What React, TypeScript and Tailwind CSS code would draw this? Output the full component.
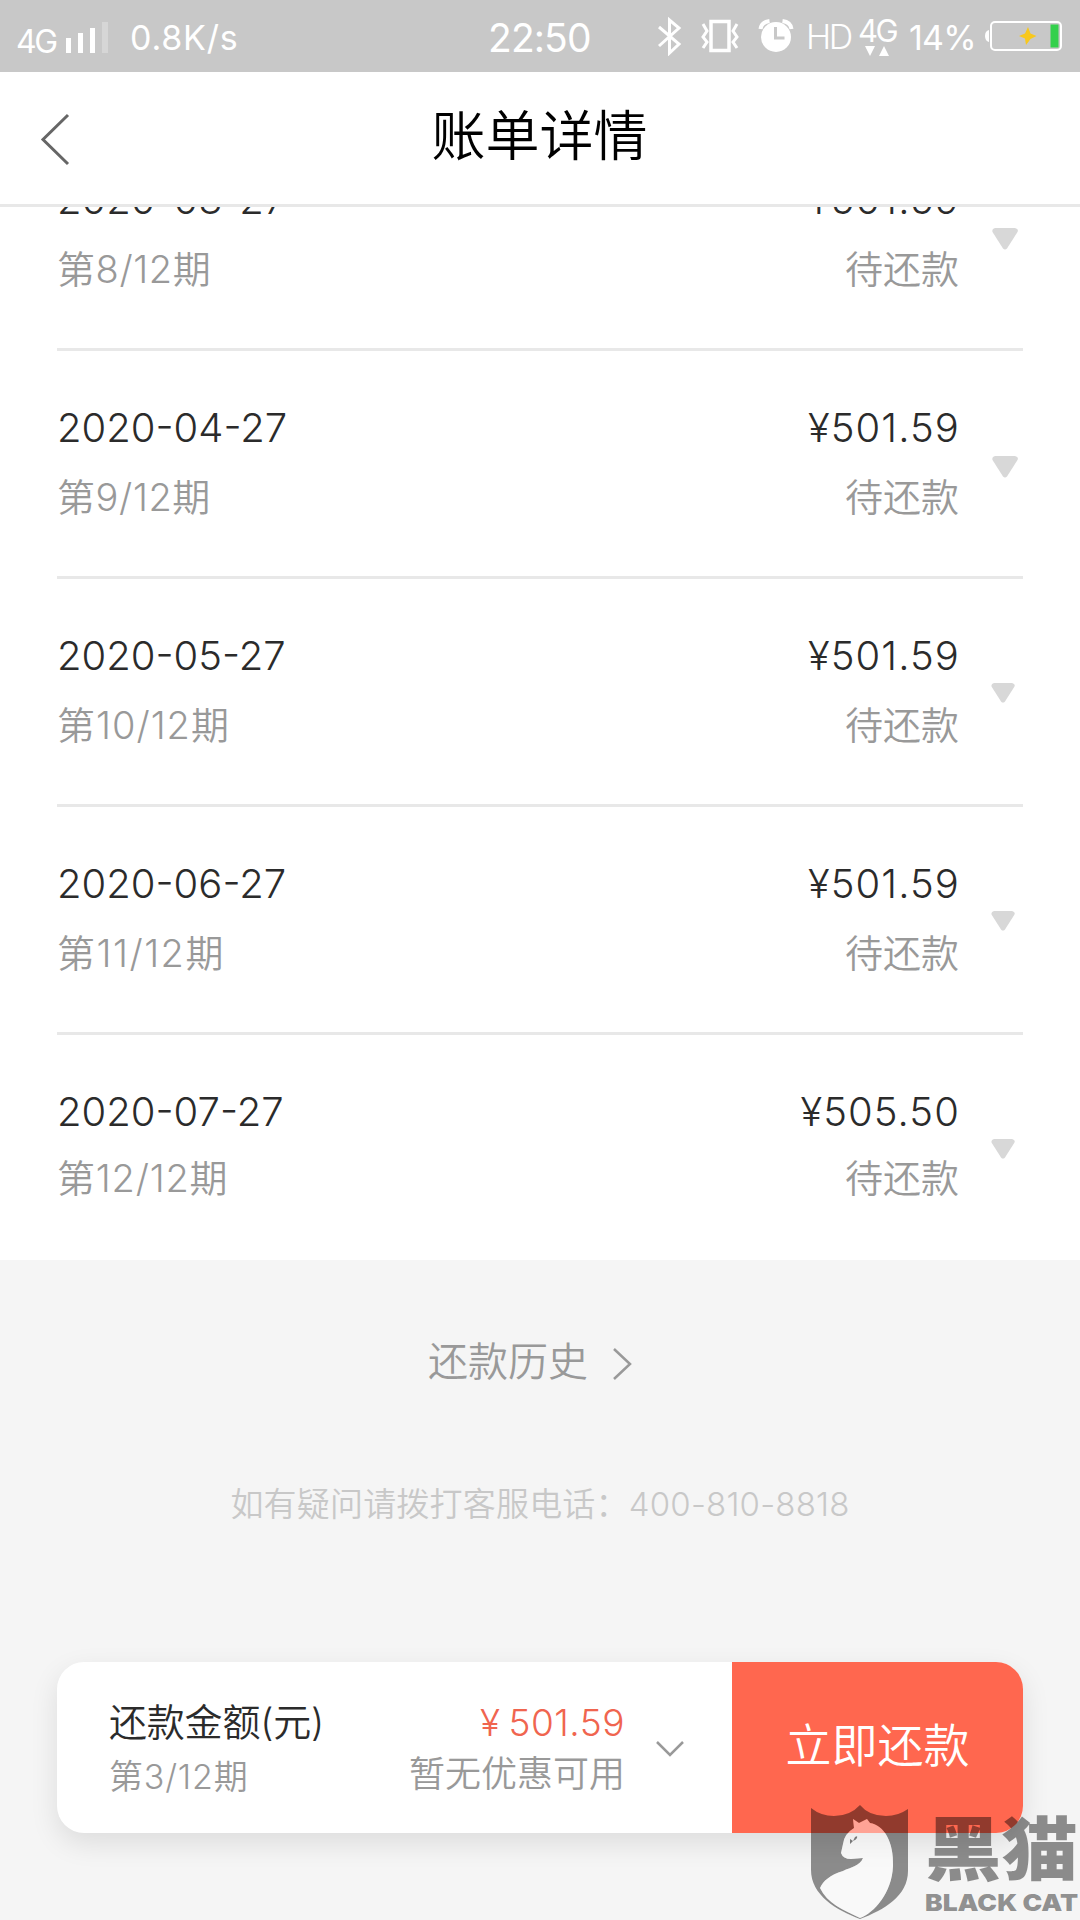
const bills = [
  { date: "2020-03-27", no: "第8/12期", amount: "¥501.59", spacing: "tracking-[0.6px]", big: true },
  { date: "2020-04-27", no: "第9/12期", amount: "¥501.59", spacing: "tracking-[0.6px]", big: true },
  { date: "2020-05-27", no: "第10/12期", amount: "¥501.59", spacing: "tracking-[1px]" },
  { date: "2020-06-27", no: "第11/12期", amount: "¥501.59", spacing: "tracking-[1.5px]" },
  { date: "2020-07-27", no: "第12/12期", amount: "¥505.50", spacing: "tracking-[0.8px]" },
];

function StatusBar() {
  return (
    <div className="flex h-[72px] shrink-0 items-start bg-[#c8c8c8] font-normal text-white">
      <div className="flex w-[488px] items-start pl-4">
        <span className="mt-[26px] w-[50px] text-[32px] leading-8 tracking-[-2.5px]">4G</span>
        <svg className="mt-[22px] h-8 w-[44px]" viewBox="0 0 44 32" fill="#fff">
          <path d="M0 16h5v15H0zM12 11h5v20h-5zM24 6h5v25h-5z" />
          <path d="M36 0h6v31h-6z" opacity=".25" />
        </svg>
        <span className="mt-[21px] pl-5 text-[34px] leading-[34px] tracking-[0.8px]">0.8K/s</span>
      </div>
      <span className="mt-[18px] w-[168px] text-[39px] leading-[39px] tracking-[-0.9px]">22:50</span>
      <svg className="mt-4 h-10 w-[150px] shrink-0" viewBox="656 16 150 40" fill="none" stroke="#fff" strokeWidth="3">
        <path d="M659 27l20 17-9.500 9V20l9.500 8-20 18" />
        <path d="M711 21.500h18v29h-18z" strokeWidth="3.500" />
        <path d="M703 24l4 7-4 6 4 5-4 6M737 24l-4 7 4 6-4 5 4 6" />
        <circle cx="776" cy="37" r="15" fill="#fff" stroke="none" />
        <path d="M760.500 29q1-7 9-8M791.500 29q-1-7-9-8" strokeWidth="4" />
        <path d="M775.500 27v11h9" stroke="#c8c8c8" />
      </svg>
      <span className="mt-5 w-[52px] text-[34px] leading-[34px] font-light tracking-[-2.5px]">HD</span>
      <div className="mt-[15px] w-[51px]">
        <div className="text-[31px] leading-[31px] tracking-[-2.5px]">4G</div>
        <svg className="ml-[7px] h-[10px] w-6" viewBox="0 0 24 10" fill="#fff">
          <path d="M0 0h10L5 10zM14 10h10L19 0z" />
        </svg>
      </div>
      <span className="mt-[21px] w-[75px] text-[34px] leading-[34px] tracking-[-0.8px]">14%</span>
      <svg className="mt-5 h-8 w-[80px] shrink-0" viewBox="984 20 80 32">
        <path d="M989 30q-4 1-4 6t4 6z" fill="#fff" />
        <rect x="991" y="22" width="70" height="28" rx="4" fill="none" stroke="#fff" strokeWidth="2" />
        <path d="M1028 27l2.500 6.500 6 2.500-6 3-4.500 6-1-6.500-6-2.500 6-2.500z" fill="#f8c81c" />
        <rect x="1050.500" y="24.500" width="8" height="23" fill="#34d04c" />
      </svg>
    </div>
  );
}

function Arrow({ big }: { big?: boolean }) {
  return (
    <svg className={big ? "mt-[105px] ml-[34px] h-[22px] w-[26px]" : "mt-[104px] ml-[33px] h-5 w-6"} viewBox="0 0 26 22">
      <path d="M3 0h20q4 1 2.500 4L15 20.500q-2 2-4 0L.5 4Q-.5 1 3 0z" fill="#d8d8d8" />
    </svg>
  );
}

function BlackCat() {
  return (
    <div className="absolute top-[1804px] left-[810px] flex h-[116px] w-[270px] text-black/43">
      <svg className="h-[116px] w-[100px] shrink-0" viewBox="0 0 100 116">
        <path
          fillRule="evenodd"
          fill="#000"
          fillOpacity=".43"
          d="M1 4Q11 12 24 12 40 12 50 1 59 12 76 12 88 12 98 5V67C98 92 74 106 50 115 26 106 1 91 1 66zM43 15L44 24Q34 30 33 40L31 49Q33 55 41 55L53 54C50 62 41 63 33 67 20 71 13 77 10 84 17 99 33 106 50 114 64 109 82 89 83 62 84 38 74 21 60 19L57 15 49 19z"
        />
        <path
          fill="#fff"
          fillOpacity=".4"
          d="M43 15L44 24Q34 30 33 40L31 49Q33 55 41 55L53 54C50 62 41 63 33 67 20 71 13 77 10 84 17 99 33 106 50 114 64 109 82 89 83 62 84 38 74 21 60 19L57 15 49 19z"
        />
        <path d="M40 35l3 2-3 3zM45 33q3-2 2 1-1 2-4 3z" fill="#000" fillOpacity=".5" />
      </svg>
      <div className="ml-[15px]">
        <div className="mt-[10px] h-[72px] origin-left scale-y-[0.9] text-[76.500px] leading-[72px] font-black whitespace-nowrap">黑猫</div>
        <div className="mt-[6px] origin-left scale-x-[1.15] text-[23px] leading-[23px] font-black whitespace-nowrap">BLACK CAT</div>
      </div>
    </div>
  );
}

export default function App() {
  return (
    <div className="relative flex h-[1920px] w-[1080px] flex-col overflow-hidden bg-[#f5f5f5] font-['Inter','Noto_Sans_CJK_SC',sans-serif] font-[350]">
      <StatusBar />
      <header className="flex h-[135px] shrink-0 items-start border-b-[3px] border-[#e8e8e8] bg-white">
        <svg className="mt-[41px] ml-[39px] h-[54px] w-[32px]" viewBox="0 0 32 54" fill="none" stroke="#666" strokeWidth="3">
          <path d="M29 2L4 26.500 29 51" />
        </svg>
        <h1 className="mt-[38px] flex-1 pr-[72px] text-center text-[54px] leading-[54px] text-black">账单详情</h1>
      </header>

      <main className="h-[1053px] shrink-0 overflow-hidden bg-white px-[57px]">
        <div className="-mt-[84px]">
          {bills.map((b, i) => (
            <div key={b.date} className={`flex h-[228px] items-start ${i < 4 ? "border-b-[3px] border-[#e8e8e8]" : ""}`}>
              <div className="flex-1 pt-[57px]">
                <div className="text-[40px] leading-[40px] font-light text-[#2b2b2b]">{b.date}</div>
                <div className={`text-[38px] leading-[38px] text-[#999] ${b.spacing} ${i < 4 ? "mt-[30px]" : "mt-[27px]"}`}>{b.no}</div>
              </div>
              <div className="pt-[57px] text-right">
                <div className="-mr-0.5 text-[40px] leading-[40px] font-light tracking-[1.1px] text-[#2b2b2b]">{b.amount}</div>
                <div className={`-mr-px text-[38px] leading-[38px] text-[#999] ${i < 4 ? "mt-[30px]" : "mt-[27px]"}`}>待还款</div>
              </div>
              <div className="flex w-[65px] shrink-0">
                <Arrow big={b.big} />
              </div>
            </div>
          ))}
        </div>
      </main>

      <div className="mt-[82px] flex h-10 items-center pl-[428px] text-[40px] leading-[40px] text-[#999]">
        还款历史
        <svg className="mt-[3px] ml-6 h-8 w-5" viewBox="0 0 20 32" fill="none" stroke="#999" strokeWidth="2.500">
          <path d="M2 1l16 15L2 31" />
        </svg>
      </div>
      <p className="mt-[106px] text-center text-[33px] leading-[33px] tracking-[0.2px] text-[#c8c8c8]">如有疑问请拨打客服电话：400-810-8818</p>

      <div className="mx-[57px] mt-[141px] flex h-[171px] shrink-0 rounded-[27px] bg-white shadow-[0_10px_28px_rgba(0,0,0,0.1)]">
        <div className="pt-[41px] pl-[52px]">
          <div className="text-[38px] leading-[38px] tracking-[-0.2px] text-[#2b2b2b]">还款金额(元)</div>
          <div className="mt-[19px] text-[34px] leading-[34px] tracking-[0.8px] text-[#999]">第3/12期</div>
        </div>
        <div className="flex-1 pt-[42px] text-right">
          <div className="text-[37px] leading-[37px] font-light tracking-[0.5px] text-[#f0654f]">
            <span className="mr-2">¥</span>501.59
          </div>
          <div className="mt-[15px] text-[36px] leading-[36px] text-[#999]">暂无优惠可用</div>
        </div>
        <svg className="mt-[78px] mr-[47px] ml-[30px] h-[18px] w-[30px]" viewBox="0 0 30 18" fill="none" stroke="#999" strokeWidth="2.500">
          <path d="M2 2l13 13L28 2" />
        </svg>
        <button className="w-[291px] rounded-r-[27px] bg-[#ff674f] pb-1.5 text-[46px] leading-[46px] text-white">立即还款</button>
      </div>
      <BlackCat />
    </div>
  );
}
